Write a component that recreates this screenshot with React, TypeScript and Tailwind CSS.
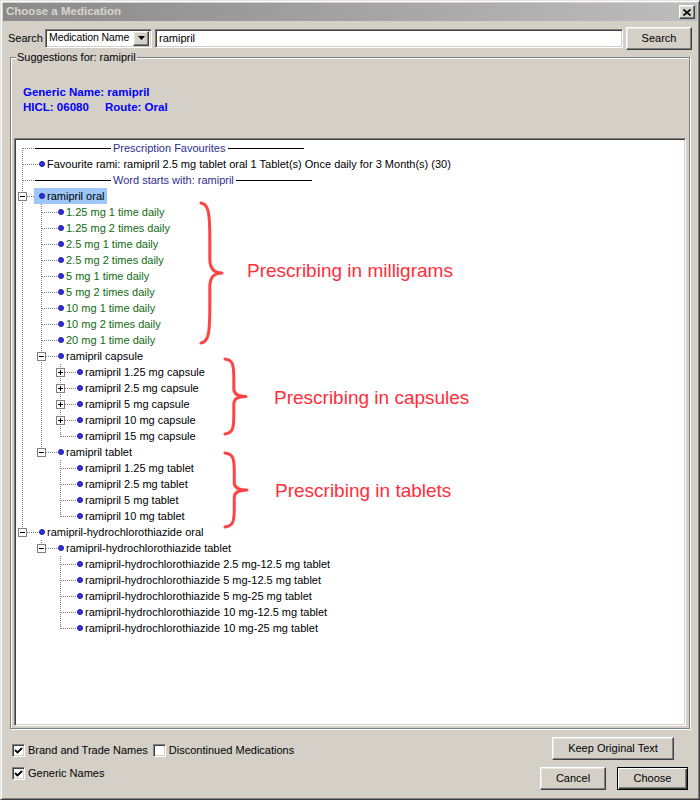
import React from 'react';

type Row = {
  guides: boolean[];
  text: string;
  header?: boolean;
  first?: boolean;
  last?: boolean;
  exp?: 'minus' | 'plus';
  green?: boolean;
  selected?: boolean;
};

const doses = [
  '1.25 mg 1 time daily',
  '1.25 mg 2 times daily',
  '2.5 mg 1 time daily',
  '2.5 mg 2 times daily',
  '5 mg 1 time daily',
  '5 mg 2 times daily',
  '10 mg 1 time daily',
  '10 mg 2 times daily',
  '20 mg 1 time daily',
];

const hydro = [
  'ramipril-hydrochlorothiazide 2.5 mg-12.5 mg tablet',
  'ramipril-hydrochlorothiazide 5 mg-12.5 mg tablet',
  'ramipril-hydrochlorothiazide 5 mg-25 mg tablet',
  'ramipril-hydrochlorothiazide 10 mg-12.5 mg tablet',
  'ramipril-hydrochlorothiazide 10 mg-25 mg tablet',
];

const rows: Row[] = [
  { guides: [], first: true, header: true, text: 'Prescription Favourites' },
  { guides: [], text: 'Favourite rami: ramipril 2.5 mg tablet oral 1 Tablet(s) Once daily for 3 Month(s) (30)' },
  { guides: [], header: true, text: 'Word starts with: ramipril' },
  { guides: [], exp: 'minus', text: 'ramipril oral', selected: true },
  ...doses.map((t) => ({ guides: [true], text: t, green: true })),
  { guides: [true], exp: 'minus', text: 'ramipril capsule' },
  ...['1.25', '2.5', '5', '10'].map((d) => ({
    guides: [true, true],
    exp: 'plus' as const,
    text: `ramipril ${d} mg capsule`,
  })),
  { guides: [true, true], last: true, text: 'ramipril 15 mg capsule' },
  { guides: [true], last: true, exp: 'minus', text: 'ramipril tablet' },
  ...['1.25', '2.5', '5', '10'].map((d, i) => ({
    guides: [true, false],
    last: i === 3,
    text: `ramipril ${d} mg tablet`,
  })),
  { guides: [], last: true, exp: 'minus', text: 'ramipril-hydrochlorothiazide oral' },
  { guides: [false], last: true, exp: 'minus', text: 'ramipril-hydrochlorothiazide tablet' },
  ...hydro.map((t, i) => ({ guides: [false, false], last: i === hydro.length - 1, text: t })),
];

const dot = { stroke: '#808080', strokeDasharray: '1 1', shapeRendering: 'crispEdges' as const };

function Guide({ on }: { on: boolean }) {
  return (
    <svg width="19" height="16" className="shrink-0">
      {on && <line x1="6.5" y1="0" x2="6.5" y2="16" {...dot} />}
    </svg>
  );
}

function Connector({ row }: { row: Row }) {
  const y1 = row.first ? 8 : 0;
  const y2 = row.last ? 8.5 : 16;
  return (
    <svg width="18" height="16" className="shrink-0 overflow-visible">
      <line x1="6.5" y1={y1} x2="6.5" y2={y2} {...dot} />
      <line x1={row.exp ? 11 : 7} y1="8.5" x2={row.header ? 19 : 22} y2="8.5" {...dot} />
      {row.exp && (
        <g shapeRendering="crispEdges">
          <rect x="2.5" y="4.5" width="8" height="8" fill="#fff" stroke="#808080" />
          <line x1="4" y1="8.5" x2="9" y2="8.5" stroke="#000" />
          {row.exp === 'plus' && <line x1="6.5" y1="6" x2="6.5" y2="11" stroke="#000" />}
        </g>
      )}
    </svg>
  );
}

function TreeRow({ row }: { row: Row }) {
  return (
    <div className="flex h-[16px] items-center">
      {row.guides.map((g, i) => (
        <Guide key={i} on={g} />
      ))}
      <Connector row={row} />
      {row.header ? (
        <div className="flex items-center">
          <span className="ml-[1px] h-px w-[76px] bg-black" />
          <span className="px-[2px] text-[#2e2e8c]">{row.text}</span>
          <span className="h-px w-[76px] bg-black" />
        </div>
      ) : (
        <div
          className={`relative flex h-[16px] items-center pl-[5px] pr-[3px] ${row.selected ? 'bg-[#9cc6f6]' : ''}`}
        >
          <span className="h-[6px] w-[6px] rounded-full border border-[#1a1a90] bg-[#3030e8]" />
          <span className={`ml-[2px] whitespace-nowrap ${row.green ? 'text-[#116b11]' : 'text-black'}`}>
            {row.text}
          </span>
        </div>
      )}
    </div>
  );
}

function Brace({ w, h }: { w: number; h: number }) {
  const m = w * 0.45;
  const d = `M2 1 C${w * 0.4} 2 ${m} ${h * 0.08} ${m} ${h * 0.25} L${m} ${h * 0.4} C${m} ${h * 0.47} ${w * 0.62} ${h * 0.5} ${w - 1} ${h * 0.5} C${w * 0.62} ${h * 0.5} ${m} ${h * 0.53} ${m} ${h * 0.6} L${m} ${h * 0.75} C${m} ${h * 0.92} ${w * 0.4} ${h - 2} 2 ${h - 1}`;
  return (
    <svg width={w} height={h} className="overflow-visible">
      <path d={d} fill="none" stroke="#ff4444" strokeWidth="3" strokeLinecap="round" strokeLinejoin="round" />
    </svg>
  );
}

function Checkbox({ checked }: { checked: boolean }) {
  return (
    <span className="flex h-[13px] w-[13px] shrink-0 items-center justify-center border border-t-[#808080] border-l-[#808080] border-r-white border-b-white bg-white shadow-[inset_1px_1px_0_#404040,inset_-1px_-1px_0_#d4d0c8]">
      {checked && (
        <svg width="9" height="9" viewBox="0 0 9 9">
          <path d="M1 4 L3.5 6.5 L8 2" fill="none" stroke="#000" strokeWidth="1.8" />
        </svg>
      )}
    </span>
  );
}

const raised =
  'border border-t-white border-l-white border-r-[#404040] border-b-[#404040] bg-[#d4d0c8] shadow-[inset_-1px_-1px_0_#808080,inset_1px_1px_0_#e8e6e0]';
const sunken =
  'border border-t-[#808080] border-l-[#808080] border-r-white border-b-white shadow-[inset_1px_1px_0_#404040,inset_-1px_-1px_0_#d4d0c8]';

export default function App() {
  return (
    <div className="flex h-[800px] w-[700px] flex-col border border-t-[#e4e2dc] border-l-[#e4e2dc] border-r-[#404040] border-b-[#404040] bg-[#d4d0c8] p-[2px] font-['Liberation_Sans',Arial,sans-serif] text-[11px] text-black shadow-[inset_1px_1px_0_#fff,inset_-1px_-1px_0_#808080]">
      {/* title bar */}
      <div className="flex h-[18px] shrink-0 items-center justify-between bg-linear-to-r from-[#8a8a8a] to-[#bdbdbd] pl-[3px] pr-[2px]">
        <span className="text-[11.5px] font-bold text-[#d8d5cd]">Choose a Medication</span>
        <span className={`flex h-[14px] w-[16px] items-center justify-center ${raised}`}>
          <svg width="8" height="7" viewBox="0 0 8 7">
            <path d="M0.5 0.5 L7.5 6.5 M7.5 0.5 L0.5 6.5" stroke="#000" strokeWidth="1.6" />
          </svg>
        </span>
      </div>

      {/* search row */}
      <div className="mt-[6px] flex h-[22px] shrink-0 items-center pl-[5px]">
        <span className="w-[37px]">Search</span>
        <div className={`flex h-[19px] w-[107px] items-center bg-white p-[2px] ${sunken}`}>
          <span className="flex-1 whitespace-nowrap pl-[1px] text-[10.5px] tracking-[-0.1px]">Medication Name</span>
          <span className={`flex h-[15px] w-[16px] shrink-0 items-center justify-center ${raised}`}>
            <svg width="7" height="4" viewBox="0 0 7 4">
              <path d="M0 0 H7 L3.5 4 Z" fill="#000" />
            </svg>
          </span>
        </div>
        <div className={`ml-[3px] flex h-[19px] w-[468px] items-center bg-white pl-[3px] ${sunken}`}>ramipril</div>
        <button className={`ml-[3px] h-[23px] w-[66px] ${raised}`}>Search</button>
      </div>

      {/* suggestions group */}
      <fieldset className="mx-[7px] mt-[2px] border border-[#808080] pb-[2px] shadow-[inset_1px_1px_0_#fff,1px_1px_0_#fff]">
        <legend className="ml-[5px] bg-[#d4d0c8] px-[1px] leading-[13px]">Suggestions for: ramipril</legend>
        <div className="mt-[21px] pl-[12px] text-[11.5px] font-bold leading-[15px] text-[#0000ff]">
          <div>Generic Name: ramipril</div>
          <div className="flex">
            <span className="w-[82px]">HICL: 06080</span>
            <span>Route: Oral</span>
          </div>
        </div>
        <div
          className={`relative mx-[3px] mt-[23px] h-[588px] overflow-hidden bg-white pl-[1px] pt-[1px] ${sunken}`}
        >
          {rows.map((r, i) => (
            <TreeRow key={i} row={r} />
          ))}

          <div className="absolute left-[184px] top-[63px]">
            <Brace w={24} h={142} />
          </div>
          <div className="absolute left-[232px] top-[121px] text-[19px] leading-[22px] text-[#ff2e3a]">
            Prescribing in milligrams
          </div>
          <div className="absolute left-[208px] top-[219px]">
            <Brace w={24} h={77} />
          </div>
          <div className="absolute left-[259px] top-[248px] text-[19px] leading-[22px] text-[#ff2e3a]">
            Prescribing in capsules
          </div>
          <div className="absolute left-[208px] top-[313px]">
            <Brace w={25} h={76} />
          </div>
          <div className="absolute left-[260px] top-[341px] text-[19px] leading-[22px] text-[#ff2e3a]">
            Prescribing in tablets
          </div>
        </div>
      </fieldset>

      {/* bottom controls */}
      <div className="flex flex-1 justify-between">
        <div className="flex flex-col gap-[10px] pl-[9px] pt-[15px]">
          <div className="flex h-[13px] items-center">
            <Checkbox checked />
            <span className="ml-[3px]">Brand and Trade Names</span>
            <span className="ml-[5px] flex items-center">
              <Checkbox checked={false} />
              <span className="ml-[3px]">Discontinued Medications</span>
            </span>
          </div>
          <div className="flex h-[13px] items-center">
            <Checkbox checked />
            <span className="ml-[3px]">Generic Names</span>
          </div>
        </div>
        <div className="flex flex-col items-end pr-[9px] pt-[8px]">
          <button className={`mr-[14px] h-[23px] w-[122px] ${raised}`}>Keep Original Text</button>
          <div className="mt-[7px] flex gap-[11px]">
            <button className={`h-[23px] w-[66px] ${raised}`}>Cancel</button>
            <button className="h-[23px] w-[71px] border border-black bg-[#d4d0c8] shadow-[inset_1px_1px_0_#fff,inset_-1px_-1px_0_#404040,inset_-2px_-2px_0_#808080]">
              Choose
            </button>
          </div>
        </div>
      </div>
    </div>
  );
}
